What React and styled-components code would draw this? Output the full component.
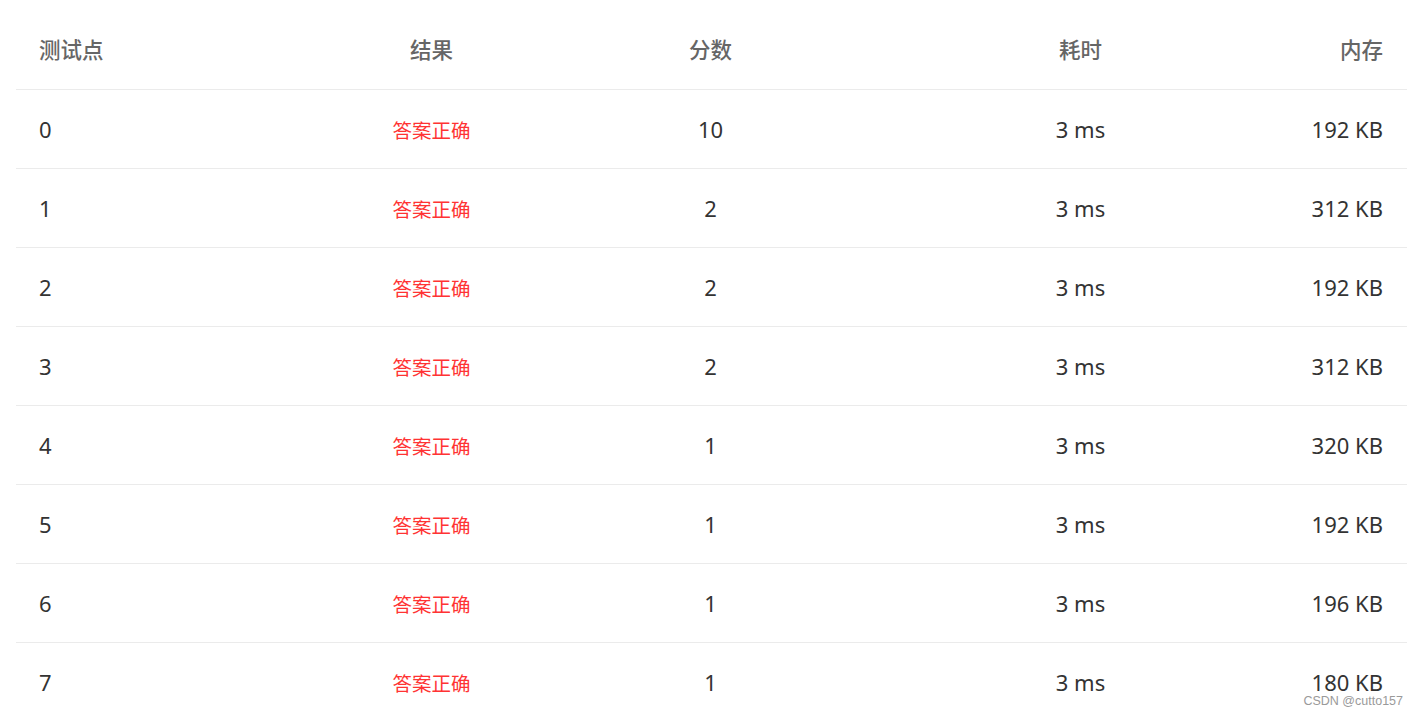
import React from "react";
import styled, { createGlobalStyle } from "styled-components";

const Global = createGlobalStyle`
  html, body { margin: 0; padding: 0; background: #fff; }
  body { font-family: "Noto Sans", "Noto Sans CJK SC", sans-serif; }
`;

const Page = styled.div`
  position: relative;
  width: 1418px;
  height: 717px;
  overflow: hidden;
  padding: 0 11px 0 16px;
  box-sizing: border-box;
`;

const cols = "276px 279px 279px 461px 96px";

const Row = styled.div`
  display: grid;
  grid-template-columns: ${cols};
  align-items: center;
  height: ${(p) => (p.$head ? "89px" : "78px")};
  border-bottom: 1px solid #ebebeb;
`;

const Cell = styled.div`
  text-align: ${(p) => p.$align || "center"};
  padding: ${(p) =>
    p.$align === "left" ? "0 0 0 23px" : p.$align === "right" ? "0 24px 0 0" : "0"};
  white-space: nowrap;
`;

const HeadCell = styled(Cell)`
  font-family: "Noto Sans CJK SC", sans-serif;
  font-size: 21.5px;
  font-weight: 500;
  color: #666;
  padding-top: 7px;
`;

const BodyCell = styled(Cell)`
  font-size: 22px;
  color: #333;
`;

const Result = styled(Cell)`
  font-family: "Noto Sans CJK SC", sans-serif;
  font-size: 19.5px;
  color: #ff3333;
`;

const Watermark = styled.div`
  position: absolute;
  right: 15px;
  bottom: 9px;
  font-family: "Liberation Sans", Arial, sans-serif;
  font-size: 12.5px;
  color: #9a9a9a;
`;

const data = [
  ["0", "10", "192 KB"],
  ["1", "2", "312 KB"],
  ["2", "2", "192 KB"],
  ["3", "2", "312 KB"],
  ["4", "1", "320 KB"],
  ["5", "1", "192 KB"],
  ["6", "1", "196 KB"],
  ["7", "1", "180 KB"],
];

export default function App() {
  return (
    <>
      <Global />
      <Page>
        <Row $head>
          <HeadCell $align="left">测试点</HeadCell>
          <HeadCell>结果</HeadCell>
          <HeadCell>分数</HeadCell>
          <HeadCell>耗时</HeadCell>
          <HeadCell $align="right">内存</HeadCell>
        </Row>
        {data.map(([id, score, mem]) => (
          <Row key={id}>
            <BodyCell $align="left">{id}</BodyCell>
            <Result>答案正确</Result>
            <BodyCell>{score}</BodyCell>
            <BodyCell>3 ms</BodyCell>
            <BodyCell $align="right">{mem}</BodyCell>
          </Row>
        ))}
        <Watermark>CSDN @cutto157</Watermark>
      </Page>
    </>
  );
}
